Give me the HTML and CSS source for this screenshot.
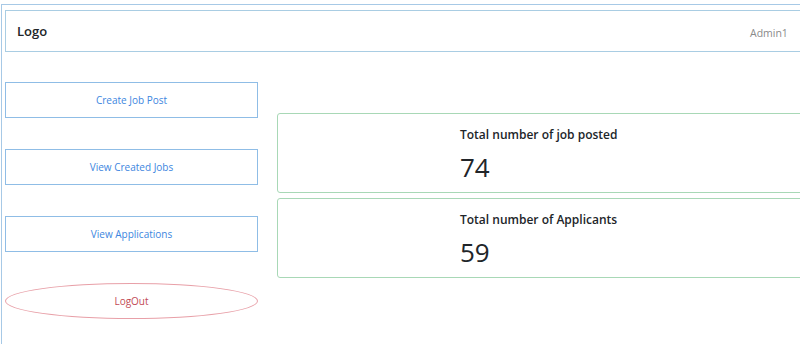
FILE: index.html
```html
<!DOCTYPE html>
<html>
<head>
<meta charset="utf-8">
<link rel="stylesheet" href="styles.css">
</head>
<body>
<div class="page">
  <header class="topbar">
    <span class="logo">Logo</span>
    <span class="user">Admin1</span>
  </header>
  <main class="main">
    <nav class="sidebar">
      <a class="btn">Create Job Post</a>
      <a class="btn">View Created Jobs</a>
      <a class="btn">View Applications</a>
      <a class="btn logout">LogOut</a>
    </nav>
    <section class="stats">
      <div class="card">
        <div class="card-title">Total number of job posted</div>
        <div class="card-value">74</div>
      </div>
      <div class="card">
        <div class="card-title">Total number of Applicants</div>
        <div class="card-value">59</div>
      </div>
    </section>
  </main>
</div>
</body>
</html>
```
FILE: styles.css
```css
html, body {
  margin: 0;
  padding: 0;
  background: #fff;
  overflow: hidden;
}
body {
  font-family: "Open Sans", "Noto Sans", sans-serif;
  color: #212529;
}
.page {
  margin: 4px 0 0 1px;
  width: 1100px;
  height: 400px;
  border-top: 1px solid #a7c9e6;
  border-left: 1px solid #a7c9e6;
  padding: 5px 0 0 3px;
  box-sizing: border-box;
}
.topbar {
  width: 1000px;
  height: 42px;
  box-sizing: border-box;
  border: 1px solid #a9cde3;
  display: flex;
  align-items: center;
  padding: 0 11px;
}
.logo {
  width: 733px;
  font-size: 13px;
  font-weight: 600;
  color: #212529;
}
.user {
  font-size: 10.5px;
  color: #8a8a8a;
  padding-top: 3px;
}
.main {
  display: flex;
  margin-top: 30px;
}
.sidebar {
  width: 253px;
  display: flex;
  flex-direction: column;
  gap: 31px;
}
.btn {
  display: flex;
  align-items: center;
  justify-content: center;
  height: 36px;
  box-sizing: border-box;
  border: 1px solid #8fbde6;
  font-size: 10px;
  color: #3d86e0;
}
.btn.logout {
  border-color: #e8a0a8;
  border-radius: 50%;
  color: #c24a55;
}
.stats {
  margin-left: 19px;
  margin-top: 31px;
  display: flex;
  flex-direction: column;
  gap: 5px;
}
.card {
  width: 700px;
  height: 80px;
  box-sizing: border-box;
  border: 1px solid #a8d8b6;
  border-radius: 3px;
  padding: 12px 0 0 182px;
}
.card-title {
  font-size: 12px;
  font-weight: 600;
  color: #212529;
}
.card-value {
  font-size: 26px;
  font-weight: 500;
  line-height: 1;
  margin-top: 11px;
  color: #212529;
}
```
